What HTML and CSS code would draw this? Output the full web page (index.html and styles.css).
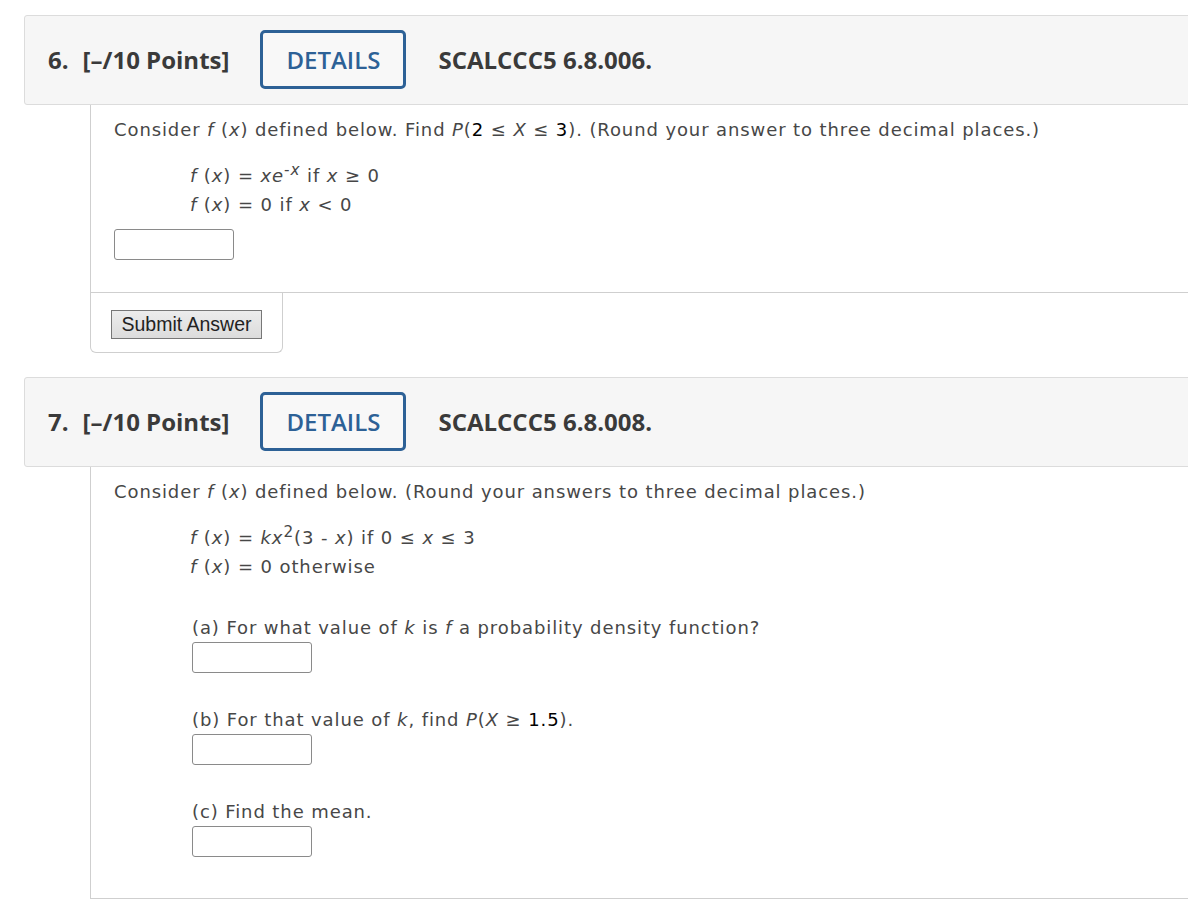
FILE: index.html
```html
<!DOCTYPE html>
<html lang="en">
<head>
    <meta charset="UTF-8">
    <title>Assignment</title>
    <link rel="stylesheet" href="styles.css">
</head>
<body>
    <div class="question">
        <div class="q-header">
            <span class="q-num">6.</span>
            <span class="q-points">[&ndash;/10 Points]</span>
            <button class="details-btn">DETAILS</button>
            <span class="q-ref">SCALCCC5 6.8.006.</span>
        </div>
        <div class="q-body">
            <p class="q-text">Consider <i>f</i> (<i>x</i>) defined below. Find <i>P</i>(<span class="num">2</span> &le; <i>X</i> &le; <span class="num">3</span>). (Round your answer to three decimal places.)</p>
            <div class="formula">
                <div><i>f</i> (<i>x</i>) = <i>xe</i><sup>-<i>x</i></sup> if <i>x</i> &ge; 0</div>
                <div><i>f</i> (<i>x</i>) = 0 if <i>x</i> &lt; 0</div>
            </div>
            <input class="answer first" type="text">
        </div>
        <div class="submit-box">
            <button class="submit-btn">Submit Answer</button>
        </div>
    </div>

    <div class="question">
        <div class="q-header">
            <span class="q-num">7.</span>
            <span class="q-points">[&ndash;/10 Points]</span>
            <button class="details-btn">DETAILS</button>
            <span class="q-ref">SCALCCC5 6.8.008.</span>
        </div>
        <div class="q-body tall">
            <p class="q-text">Consider <i>f</i> (<i>x</i>) defined below. (Round your answers to three decimal places.)</p>
            <div class="formula">
                <div><i>f</i> (<i>x</i>) = <i>kx</i><sup>2</sup>(3 - <i>x</i>) if 0 &le; <i>x</i> &le; 3</div>
                <div><i>f</i> (<i>x</i>) = 0 otherwise</div>
            </div>
            <div class="part">
                <p>(a) For what value of <i>k</i> is <i>f</i> a probability density function?</p>
                <input class="answer" type="text">
            </div>
            <div class="part">
                <p>(b) For that value of <i>k</i>, find <i>P</i>(<i>X</i> &ge; <span class="num">1.5</span>).</p>
                <input class="answer" type="text">
            </div>
            <div class="part">
                <p>(c) Find the mean.</p>
                <input class="answer" type="text">
            </div>
        </div>
    </div>
</body>
</html>
```

FILE: styles.css
```css
* {
    margin: 0;
    padding: 0;
    box-sizing: border-box;
}
body {
    background: #fff;
    overflow: hidden;
    padding: 15px 0 0 24px;
    font-family: "DejaVu Sans", Verdana, sans-serif;
    color: #474747;
}
.question {
    width: 1200px;
    margin-bottom: 24px;
}
.q-header {
    height: 90px;
    display: flex;
    align-items: center;
    padding: 0 0 2px 23px;
    background: #f6f6f6;
    border: 1px solid #dcdcdc;
    border-radius: 3px 0 0 3px;
    font-family: "Open Sans", sans-serif;
    font-weight: 700;
    font-size: 24px;
    color: #3a3a3a;
}
.q-num {
    margin-right: 14px;
}
.details-btn {
    width: 146px;
    height: 59px;
    margin: 0 32px 0 31px;
    background: #f8f8f8;
    border: 3px solid #2d6196;
    border-radius: 5px;
    font-family: "Open Sans", sans-serif;
    font-weight: 600;
    font-size: 24px;
    color: #2d6196;
}
.q-body {
    margin-left: 66px;
    padding: 10px 0 32px 23px;
    border-left: 1px solid #cfcfcf;
    border-bottom: 1px solid #cfcfcf;
    font-size: 18px;
    line-height: 29px;
    letter-spacing: 0.9px;
}
.q-body.tall {
    padding-bottom: 41px;
}
.q-text {
    margin-bottom: 17px;
}
.num {
    color: #000;
}
.formula {
    padding-left: 76px;
}
.formula sup {
    font-size: 0.85em;
    line-height: 0;
    vertical-align: 0.45em;
}
.answer {
    display: block;
    width: 120px;
    height: 31px;
    border: 1px solid #8a8a8a;
    border-radius: 3px;
    background: #fff;
}
.answer.first {
    margin-top: 10px;
}
.part {
    padding-left: 78px;
    margin-top: 32px;
}
.submit-box {
    width: 193px;
    margin-left: 66px;
    padding: 17px 0 13px 20px;
    border: 1px solid #cfcfcf;
    border-top: none;
    border-radius: 0 0 6px 6px;
}
.submit-btn {
    display: block;
    width: 151px;
    height: 29px;
    background: linear-gradient(#ececec, #dcdcdc);
    border: 1px solid #777;
    font-family: "Liberation Sans", Arial, sans-serif;
    font-size: 19.5px;
    color: #222;
}
```
